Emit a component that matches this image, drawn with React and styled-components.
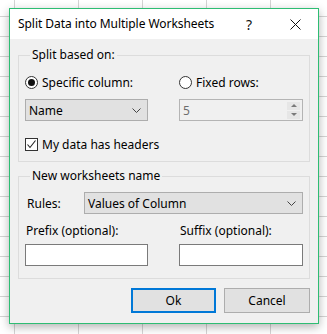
import styled, { createGlobalStyle } from "styled-components";

const GlobalStyle = createGlobalStyle`
  html, body {
    margin: 0;
    padding: 0;
    height: 100%;
  }
  body {
    overflow: hidden;
    font-family: "Noto Sans", "Liberation Sans", sans-serif;
    font-size: 12px;
    color: #000;
    background-color: #ffffff;
    background-image:
      linear-gradient(to right, #d4d4d4 1px, transparent 1px),
      linear-gradient(to bottom, #d4d4d4 1px, transparent 1px);
    background-size: 64px 20px;
    background-position: 14px 16px;
  }
`;

const Page = styled.div`
  padding: 8px 0 0 9px;
`;

const Dialog = styled.div`
  width: 310px;
  height: 316px;
  box-sizing: border-box;
  border: 1px solid #2dbd73;
  background: #f0f0f0;
  box-shadow: 0 3px 9px rgba(0, 0, 0, 0.3);
  display: flex;
  flex-direction: column;
`;

const TitleBar = styled.div`
  height: 30px;
  flex: none;
  background: #ffffff;
  display: flex;
  align-items: center;
  padding-left: 8px;
`;

const Title = styled.div`
  flex: 1;
  font-size: 12px;
  line-height: 16px;
  letter-spacing: -0.05px;
`;

const TitleButton = styled.div`
  width: ${(p) => p.$w}px;
  height: 30px;
  display: flex;
  align-items: center;
  justify-content: center;
  font-size: 14px;
  color: #111;
`;

const Body = styled.div`
  flex: 1;
  padding: 8px 8px 0 8px;
  display: flex;
  flex-direction: column;
`;

const Group = styled.fieldset`
  margin: ${(p) => p.$mt || 0}px 0 0 0;
  border: 1px solid #dcdcdc;
  padding: ${(p) => p.$pad};
  min-width: 0;
`;

const Legend = styled.legend`
  margin-left: 5px;
  padding: 0 2px;
  line-height: 16px;
  font-size: 12px;
`;

const Columns = styled.div`
  display: grid;
  grid-template-columns: 123px 124px;
  column-gap: 31px;
  row-gap: ${(p) => p.$gap}px;
  margin-top: ${(p) => p.$mt || 0}px;
`;

const OptionRow = styled.label`
  display: flex;
  align-items: center;
  height: 16px;
  gap: 4px;
  white-space: nowrap;
`;

const Radio = styled.span`
  width: 13px;
  height: 13px;
  box-sizing: border-box;
  border-radius: 50%;
  border: 1px solid #333;
  background: #fff;
  display: flex;
  align-items: center;
  justify-content: center;
  &::after {
    content: "";
    width: 7px;
    height: 7px;
    border-radius: 50%;
    background: ${(p) => (p.$on ? "#111" : "transparent")};
  }
`;

const Check = styled.span`
  width: 13px;
  height: 13px;
  box-sizing: border-box;
  border: 1px solid #333;
  background: #fff;
  display: flex;
  align-items: center;
  justify-content: center;
`;

const Select = styled.div`
  height: 22px;
  box-sizing: border-box;
  border: 1px solid #adadad;
  background: #e1e1e1;
  display: flex;
  align-items: center;
  padding: 0 6px 0 3px;
  ${(p) => p.$flex && "flex: 1;"}
`;

const SelectText = styled.span`
  flex: 1;
`;

const Spin = styled.div`
  height: 22px;
  box-sizing: border-box;
  border: 1px solid #b4b4b4;
  background: #f0f0f0;
  display: flex;
  align-items: center;
  padding-left: 3px;
  color: #6d6d6d;
`;

const SpinButtons = styled.div`
  display: flex;
  flex-direction: column;
  gap: 1px;
  margin: 0 2px 0 auto;
`;

const SpinButton = styled.div`
  width: 13px;
  height: 8px;
  background: #e6e6e6;
  display: flex;
  align-items: center;
  justify-content: center;
`;

const Arrow = styled.span`
  width: 0;
  height: 0;
  border-left: 3px solid transparent;
  border-right: 3px solid transparent;
  ${(p) =>
    p.$up
      ? "border-bottom: 3px solid #7a7a7a;"
      : "border-top: 3px solid #7a7a7a;"}
`;

const CheckRow = styled(OptionRow)`
  margin-top: 15px;
`;

const RulesRow = styled.div`
  display: flex;
  align-items: center;
`;

const RulesLabel = styled.span`
  width: 57px;
  padding-left: 2px;
`;

const FieldLabel = styled.div`
  height: 16px;
  line-height: 16px;
  padding-left: 1px;
  margin-bottom: 5px;
  white-space: nowrap;
`;

const TextBox = styled.div`
  height: 22px;
  box-sizing: border-box;
  border: 1px solid #7a7a7a;
  background: #fff;
`;

const Buttons = styled.div`
  display: flex;
  justify-content: flex-end;
  gap: 8px;
  margin-top: 9px;
`;

const Button = styled.div`
  width: ${(p) => p.$w}px;
  height: 25px;
  box-sizing: border-box;
  border: ${(p) => (p.$primary ? "2px solid #0078d7" : "1px solid #adadad")};
  background: #e1e1e1;
  display: flex;
  align-items: center;
  justify-content: center;
`;

const Chevron = () => (
  <svg width="9" height="5" viewBox="0 0 9 5">
    <path d="M0.5 0.5 L4.5 4.5 L8.5 0.5" fill="none" stroke="#444" strokeWidth="1" />
  </svg>
);

const CloseIcon = () => (
  <svg width="11" height="11" viewBox="0 0 11 11">
    <path d="M0.5 0.5 L10.5 10.5 M10.5 0.5 L0.5 10.5" stroke="#111" strokeWidth="1" />
  </svg>
);

const Tick = () => (
  <svg width="11" height="11" viewBox="0 0 11 11">
    <path d="M1.5 5.5 L4 8.5 L9.5 1.5" fill="none" stroke="#222" strokeWidth="1.1" />
  </svg>
);

export default function App() {
  return (
    <Page>
      <GlobalStyle />
      <Dialog>
        <TitleBar>
          <Title>Split Data into Multiple Worksheets</Title>
          <TitleButton $w={46}>?</TitleButton>
          <TitleButton $w={46}>
            <CloseIcon />
          </TitleButton>
        </TitleBar>
        <Body>
          <Group $pad="11px 6px 9px 6px">
            <Legend>Split based on:</Legend>
            <Columns $gap={9}>
              <OptionRow>
                <Radio $on />
                Specific column:
              </OptionRow>
              <OptionRow>
                <Radio />
                Fixed rows:
              </OptionRow>
              <Select>
                <SelectText>Name</SelectText>
                <Chevron />
              </Select>
              <Spin>
                5
                <SpinButtons>
                  <SpinButton>
                    <Arrow $up />
                  </SpinButton>
                  <SpinButton>
                    <Arrow />
                  </SpinButton>
                </SpinButtons>
              </Spin>
            </Columns>
            <CheckRow>
              <Check>
                <Tick />
              </Check>
              My data has headers
            </CheckRow>
          </Group>
          <Group $mt={6} $pad="8px 6px 12px 6px">
            <Legend>New worksheets name</Legend>
            <RulesRow>
              <RulesLabel>Rules:</RulesLabel>
              <Select $flex>
                <SelectText>Values of Column</SelectText>
                <Chevron />
              </Select>
            </RulesRow>
            <Columns $gap={0} $mt={9}>
              <div>
                <FieldLabel>Prefix (optional):</FieldLabel>
                <TextBox />
              </div>
              <div>
                <FieldLabel>Suffix (optional):</FieldLabel>
                <TextBox />
              </div>
            </Columns>
          </Group>
          <Buttons>
            <Button $w={85} $primary>
              Ok
            </Button>
            <Button $w={86}>Cancel</Button>
          </Buttons>
        </Body>
      </Dialog>
    </Page>
  );
}
